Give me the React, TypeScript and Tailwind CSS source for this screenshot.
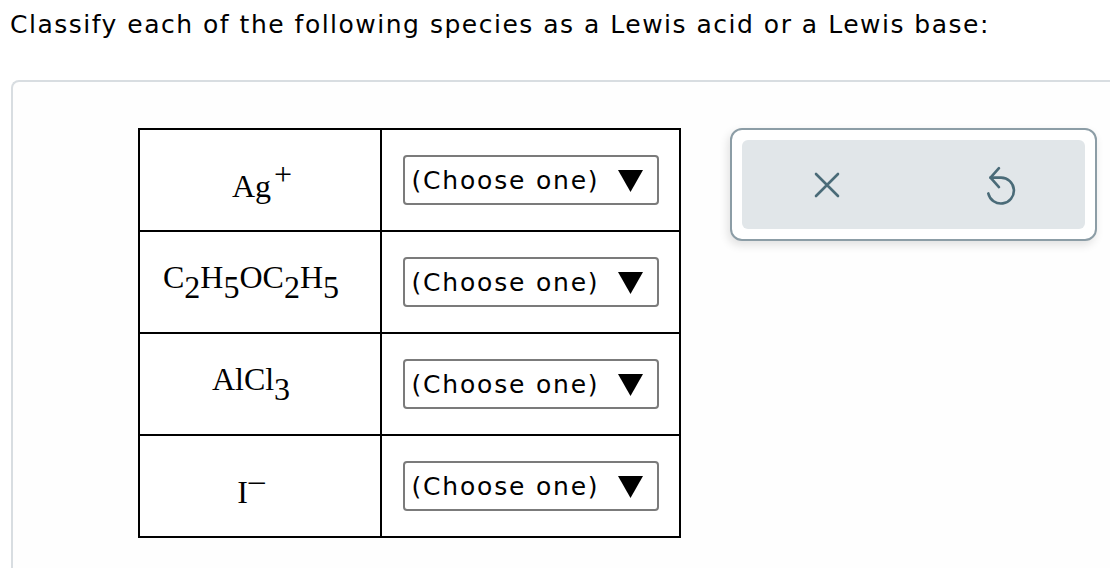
import React from 'react';

const species = [
  { key: 'ag', shift: 'pl-[4px]' },
  { key: 'ether', shift: 'pr-[18px]' },
  { key: 'alcl3', shift: 'pr-[18px]' },
  { key: 'iodide', shift: 'pr-[18px]' },
];

function Formula({ kind }: { kind: string }) {
  const sub = 'align-[-10px]';
  if (kind === 'ag') {
    return (
      <span>
        Ag<span className="ml-[3px] align-[12px]">+</span>
      </span>
    );
  }
  if (kind === 'ether') {
    return (
      <span>
        C<span className={sub}>2</span>H<span className={sub}>5</span>OC<span className={sub}>2</span>H
        <span className={sub}>5</span>
      </span>
    );
  }
  if (kind === 'alcl3') {
    return (
      <span>
        AlCl<span className={sub}>3</span>
      </span>
    );
  }
  return (
    <span>
      I<span className="ml-[1px] align-[12px]">&#8211;</span>
    </span>
  );
}

function ChooseOne() {
  return (
    <div className="flex h-[50px] w-[256px] items-center rounded-[4px] border-2 border-[#7b7b7b] bg-white pl-[7px] pt-[2px] text-[25px] leading-[30px] tracking-[1.8px] text-black">
      <span>(Choose one)</span>
      <svg className="ml-[19px]" width="25" height="22" viewBox="0 0 25 22">
        <path d="M0 0 H25 L12.5 22 Z" fill="#000" />
      </svg>
    </div>
  );
}

export default function App() {
  return (
    <div className="h-[568px] w-full overflow-hidden bg-white" style={{ fontFamily: '"DejaVu Sans", Verdana, sans-serif' }}>
      <p className="pl-[10px] pt-[10px] text-[25px] leading-[30px] tracking-[1.5px] text-black">
        Classify each of the following species as a Lewis acid or a Lewis base:
      </p>

      <div className="ml-[11px] mt-[40px] flex h-[600px] w-[1120px] items-start gap-[49px] rounded-tl-lg border-l-2 border-t-2 border-[#d8dde1] bg-[#fefefe] pl-[125px] pt-[46px]">
        <div className="w-[543px] border-2 border-black bg-white">
          {species.map((s, i) => (
            <div key={s.key} className={`flex h-[100px] ${i < 3 ? 'box-content border-b-2 border-black' : ''}`}>
              <div
                className={`flex w-[242px] items-center justify-center border-r-2 border-black text-[32px] ${s.shift}`}
                style={{ fontFamily: '"Liberation Serif", "Times New Roman", serif' }}
              >
                <Formula kind={s.key} />
              </div>
              <div className="flex flex-1 items-center justify-center">
                <ChooseOne />
              </div>
            </div>
          ))}
        </div>

        <div className="rounded-[12px] border-2 border-[#8c9da6] bg-white p-[10px] shadow-[-2px_4px_10px_rgba(0,0,0,0.12)]">
          <div className="flex h-[89px] w-[343px] rounded-[6px] bg-[#e1e6e9]">
            <button className="flex flex-1 items-center justify-center">
              <svg width="26" height="26" viewBox="0 0 26 26" fill="none" stroke="#4a6b78" strokeWidth="2.6" strokeLinecap="round">
                <path d="M2 2 L24 24 M24 2 L2 24" />
              </svg>
            </button>
            <button className="flex flex-1 items-center justify-center pl-[3px]">
              <svg width="32" height="40" viewBox="0 0 30 38" fill="none" stroke="#4a6b78" strokeWidth="2.5" strokeLinecap="round" strokeLinejoin="round">
                <path d="M14 3 L6 12 L14 21" />
                <path d="M6 12 H16 A12.3 12.3 0 1 1 3.9 27" />
              </svg>
            </button>
          </div>
        </div>
      </div>
    </div>
  );
}
